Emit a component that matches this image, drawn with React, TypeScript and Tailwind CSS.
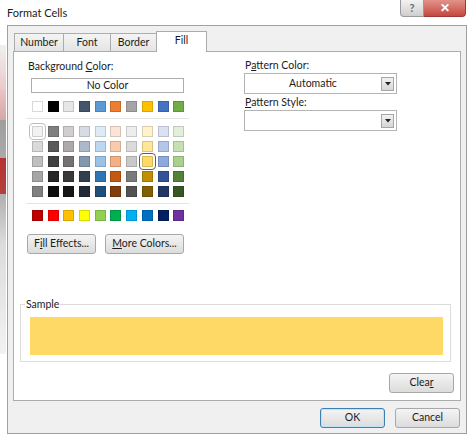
import type { ReactNode } from 'react'

const topRow = ['#FFFFFF', '#000000', '#E7E6E6', '#44546A', '#5B9BD5', '#ED7D31', '#A5A5A5', '#FFC000', '#4472C4', '#70AD47']

const themeRows = [
  ['#F2F2F2', '#7F7F7F', '#D0CECE', '#D6DCE4', '#DDEBF7', '#FCE4D6', '#EDEDED', '#FFF2CC', '#D9E1F2', '#E2EFDA'],
  ['#D9D9D9', '#595959', '#AEAAAA', '#ACB9CA', '#BDD7EE', '#F8CBAD', '#DBDBDB', '#FFE699', '#B4C6E7', '#C6E0B4'],
  ['#BFBFBF', '#404040', '#757171', '#8497B0', '#9BC2E6', '#F4B084', '#C9C9C9', '#FFD966', '#8EA9DB', '#A9D08E'],
  ['#A6A6A6', '#262626', '#3A3838', '#333F4F', '#2F75B5', '#C65911', '#7B7B7B', '#BF8F00', '#305496', '#548235'],
  ['#808080', '#0D0D0D', '#161616', '#222B35', '#1F4E78', '#833C0C', '#525252', '#806000', '#203764', '#375623'],
]

const standard = ['#C00000', '#FF0000', '#FFC000', '#FFFF00', '#92D050', '#00B050', '#00B0F0', '#0070C0', '#002060', '#7030A0']

function Swatch({ color, state }: { color: string; state?: 'hover' | 'selected' }) {
  const ring =
    state === 'selected'
      ? 'outline outline-1 outline-[#5f5f5f] outline-offset-[2px] rounded-[1px]'
      : state === 'hover'
        ? 'outline outline-1 outline-[#bdbdbd] outline-offset-[2px] rounded-[1px]'
        : ''
  return <div className={`w-[11px] h-[11px] border border-black/15 ${ring}`} style={{ background: color }} />
}

function SwatchRow({ colors, marks }: { colors: string[]; marks?: Record<number, 'hover' | 'selected'> }) {
  return (
    <div className="grid grid-cols-[repeat(10,11px)] gap-x-[4.7px]">
      {colors.map((c, i) => (
        <Swatch key={i} color={c} state={marks?.[i]} />
      ))}
    </div>
  )
}

function Button({ width, children, primary }: { width: string; children: ReactNode; primary?: boolean }) {
  return (
    <div
      className={`${width} h-[20px] flex items-center justify-center rounded-[3px] border bg-linear-to-b from-[#f4f4f4] to-[#dcdcdc] ${
        primary ? 'border-[#3c7fb1] shadow-[inset_0_0_0_1px_#bfe3f7]' : 'border-[#a8a8a8]'
      }`}
    >
      {children}
    </div>
  )
}

function Combo({ value }: { value?: string }) {
  return (
    <div className="w-[153px] h-[21px] border border-[#b4b4b4] bg-white flex items-center">
      <div className="flex-1 text-center">{value}</div>
      <div className="w-[13px] h-[14px] mr-[2px] border border-[#a6a6a6] bg-linear-to-b from-[#f2f2f2] to-[#d6d6d6] flex items-center justify-center">
        <svg width="6" height="4" viewBox="0 0 6 4">
          <path d="M0 0h6L3 3.5z" fill="#222" />
        </svg>
      </div>
    </div>
  )
}

const U = ({ children }: { children: ReactNode }) => <span className="underline underline-offset-[1px]">{children}</span>

export default function App() {
  return (
    <div className="flex w-[474px] h-[442px] bg-white overflow-hidden font-['Lato','Liberation_Sans',sans-serif] text-[10.5px] text-[#1b1b1b]">
      {/* strip of the window behind the dialog */}
      <div className="w-[6px] shrink-0 flex flex-col">
        <div className="h-[45px] bg-white" />
        <div className="h-[45px] bg-linear-to-b from-[#f0f0f0] to-[#e9c9c9]" />
        <div className="h-[30px] bg-linear-to-b from-[#e9c4c4] to-[#d6a6a6]" />
        <div className="h-[38px] bg-linear-to-b from-[#9e9e9e] to-[#aaaaaa]" />
        <div className="h-[36px] bg-linear-to-b from-[#b83030] to-[#b2403e]" />
        <div className="h-[50px] bg-linear-to-b from-[#b0b0b0] to-[#dcdcdc]" />
        <div className="h-[110px] bg-linear-to-b from-[#dcdcdc] to-[#f2f2f2]" />
        <div className="flex-1 bg-white" />
      </div>

      <div className="flex flex-col w-[468px]">
        {/* Title bar */}
        <div className="flex justify-between h-[25px]">
          <div className="ml-[1px] pt-[5px] leading-[16px] text-[11px]">Format Cells</div>
          <div className="flex mr-[8px] h-[17px]">
            <div className="w-[24px] h-full flex items-center justify-center rounded-bl-[4px] border border-t-0 border-[#9a9a9a] bg-linear-to-b from-[#f2f2f2] to-[#cfcfcf] text-[#6b6b6b] text-[11px] font-bold">
              ?
            </div>
            <div className="w-[42px] h-full flex items-center justify-center rounded-br-[4px] border border-t-0 border-l-0 border-[#9e3a33] bg-linear-to-b from-[#e0928a] to-[#c5473e] text-white text-[12px] font-bold leading-none">
              ✕
            </div>
          </div>
        </div>

        {/* Client area */}
        <div className="ml-[1px] w-[460px] h-[409px] border border-[#a0a0a0] bg-[#f0f0f0] flex flex-col">
          {/* Tabs */}
          <div className="flex items-end h-[20px] mt-[5px] ml-[6px]">
            <div className="w-[50px] h-[18px] flex items-center justify-center border border-b-0 border-[#acacac] bg-linear-to-b from-[#f4f4f4] to-[#e4e4e4]">
              Number
            </div>
            <div className="-ml-px w-[48px] h-[18px] flex items-center justify-center border border-b-0 border-[#acacac] bg-linear-to-b from-[#f4f4f4] to-[#e4e4e4]">
              Font
            </div>
            <div className="-ml-px w-[47px] h-[18px] flex items-center justify-center border border-b-0 border-[#acacac] bg-linear-to-b from-[#f4f4f4] to-[#e4e4e4]">
              Border
            </div>
            <div className="relative z-10 -ml-px -mb-px w-[51px] h-[21px] flex items-center justify-center pb-[2px] border border-b-0 border-[#acacac] bg-white">
              Fill
            </div>
          </div>

          {/* Tab panel */}
          <div className="ml-[5px] w-[448px] h-[350px] border border-[#acacac] bg-white flex flex-col">
            <div className="flex">
              {/* Left column */}
              <div className="w-[230px] flex flex-col">
                <div className="ml-[14px] mt-[7px] h-[15px] leading-[15px]">
                  Background <U>C</U>olor:
                </div>
                <div className="ml-[17px] mt-[4px] w-[153px] h-[15px] border border-[#adadad] flex items-center justify-center">
                  No Color
                </div>
                <div className="ml-[18px] mt-[8px]">
                  <SwatchRow colors={topRow} />
                </div>
                <div className="ml-[12px] mt-[6px] w-[163px] h-px bg-[#e4e4e4]" />
                <div className="ml-[18px] mt-[7px] flex flex-col gap-y-[4px]">
                  {themeRows.map((row, r) => (
                    <SwatchRow
                      key={r}
                      colors={row}
                      marks={r === 0 ? { 0: 'hover' } : r === 2 ? { 7: 'selected' } : undefined}
                    />
                  ))}
                </div>
                <div className="ml-[12px] mt-[6px] w-[163px] h-px bg-[#e4e4e4]" />
                <div className="ml-[18px] mt-[6px]">
                  <SwatchRow colors={standard} />
                </div>
                <div className="ml-[13px] mt-[13px] flex gap-[9px]">
                  <Button width="w-[69px]">
                    <span>
                      F<U>i</U>ll Effects...
                    </span>
                  </Button>
                  <Button width="w-[79px]">
                    <span>
                      <U>M</U>ore Colors...
                    </span>
                  </Button>
                </div>
              </div>

              {/* Right column */}
              <div className="w-[153px] flex flex-col">
                <div className="ml-[1px] mt-[6px] h-[15px] leading-[15px]">
                  P<U>a</U>ttern Color:
                </div>
                <Combo value="Automatic" />
                <div className="ml-[1px] mt-[1px] h-[15px] leading-[15px]">
                  <U>P</U>attern Style:
                </div>
                <Combo />
              </div>
            </div>

            {/* Sample */}
            <fieldset className="ml-[6px] mt-[43px] w-[431px] border border-[#dcdcdc] pb-[6px]">
              <legend className="ml-[4px] px-[1px] h-[15px] leading-[15px]">Sample</legend>
              <div className="ml-[9px] mt-[5px] w-[413px] h-[38px] bg-[#FFD966]" />
            </fieldset>

            <div className="self-end mr-[6px] mt-[11px]">
              <Button width="w-[65px]">
                <span>
                  Clea<U>r</U>
                </span>
              </Button>
            </div>
          </div>

          {/* Dialog buttons */}
          <div className="flex justify-end gap-[10px] mt-[7px] pr-[6px]">
            <Button width="w-[65px]" primary>
              OK
            </Button>
            <Button width="w-[65px]">Cancel</Button>
          </div>
        </div>
      </div>
    </div>
  )
}
